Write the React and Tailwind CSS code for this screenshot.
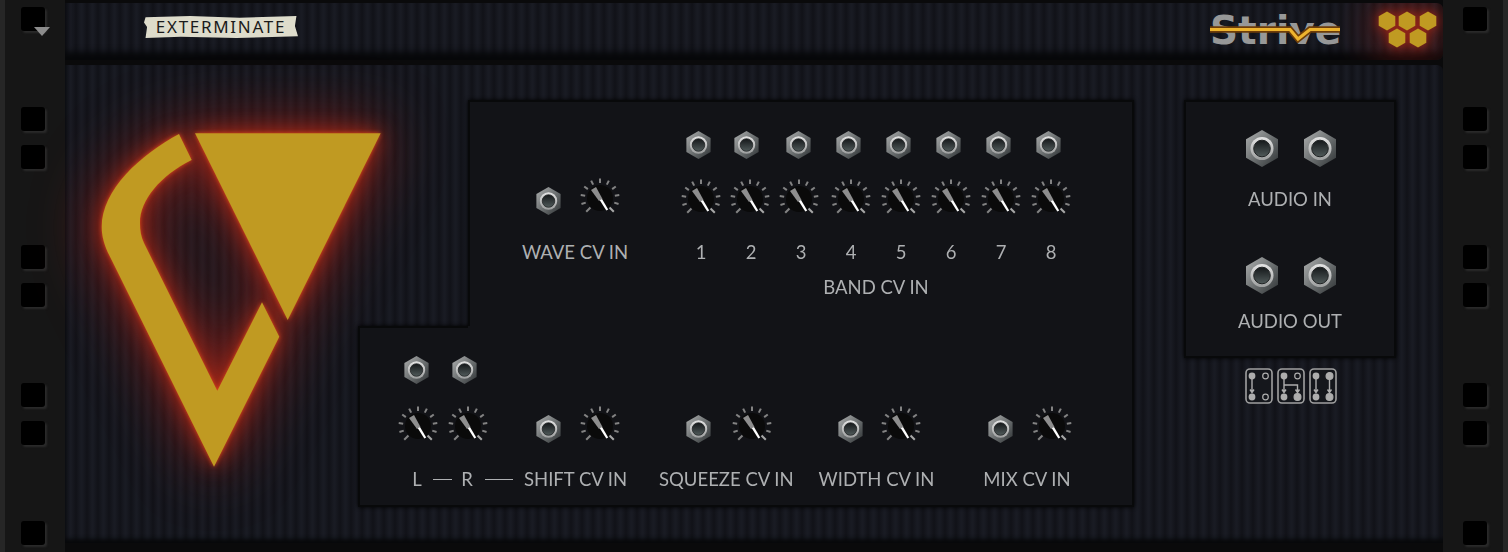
const HOLES = [7, 107, 145, 245, 283, 383, 421, 521];
const TICKS = [-135, -108, -81, -54, -27, 0, 27, 54, 81, 108, 135];

const Rail = ({ side }) => (
  <div
    className={`relative w-[65px] h-full shrink-0 bg-[#161616] ${
      side === 'left'
        ? 'pl-4 border-l-[5px] border-l-[#262626]'
        : 'pl-[20px] border-r-[5px] border-r-[#262626]'
    }`}
  >
    {HOLES.map((y, i) => (
      <div
        key={y}
        className="w-6 h-6 rounded-[3px] bg-black shadow-[2px_2px_2px_#2b2b2b]"
        style={{ marginTop: i === 0 ? y : y - HOLES[i - 1] - 24 }}
      />
    ))}
  </div>
);

const Defs = () => (
  <svg className="absolute w-0 h-0">
    <defs>
      <linearGradient id="nut" x1="0" y1="0" x2="1" y2="1">
        <stop offset="0" stopColor="#aeb0b0" />
        <stop offset="0.5" stopColor="#6e7273" />
        <stop offset="1" stopColor="#2e3234" />
      </linearGradient>
      <linearGradient id="ring" x1="0" y1="0" x2="0" y2="1">
        <stop offset="0" stopColor="#e4e4e4" />
        <stop offset="1" stopColor="#9c9e9e" />
      </linearGradient>
      <linearGradient id="hole" x1="0" y1="0" x2="0" y2="1">
        <stop offset="0" stopColor="#15181a" />
        <stop offset="1" stopColor="#505a5a" />
      </linearGradient>
    </defs>
  </svg>
);

const Jack = ({ big, className = '' }) => (
  <svg viewBox="0 0 32 37" className={`shrink-0 ${big ? 'w-8 h-[37px]' : 'w-[25px] h-[28px]'} ${className}`}>
    <path d="M16 0L32 9.2V27.8L16 37L0 27.8V9.2Z" fill="url(#nut)" />
    <circle cx="16" cy="18.5" r="11.5" fill="url(#ring)" />
    <circle cx="16" cy="18.5" r="8.3" fill="url(#hole)" stroke="#202324" />
  </svg>
);

const Knob = ({ className = '' }) => (
  <svg viewBox="-20 -20 40 40" className={`w-10 h-10 shrink-0 ${className}`}>
    {TICKS.map((a) => (
      <line
        key={a}
        x1="0"
        y1={a === 135 || a === -135 ? -13.5 : -15}
        x2="0"
        y2="-19.5"
        stroke={a === 135 ? '#a8a8a8' : '#838383'}
        strokeWidth="2"
        transform={`rotate(${a})`}
      />
    ))}
    <circle r="13" fill="#0a0a0a" />
    <path d="M-9 -8L-4 -11L2.5 1L-1 3Z" fill="#8e8e8e" />
    <path d="M-0.2 2.2L2 0.9L8.2 11.5L6.3 12.6Z" fill="#fff" />
  </svg>
);

const Label = ({ className = '', children }) => (
  <div className={`h-6 leading-6 text-[18.5px] text-center whitespace-nowrap text-[#aeb0b2] ${className}`}>
    {children}
  </div>
);

const Matrix = ({ mode }) => {
  const filledTR = mode === 3;
  const filledBR = mode !== 1;
  return (
    <svg viewBox="0 0 28 36" className="w-7 h-9 shrink-0">
      <rect x="1" y="1" width="26" height="34" rx="4" fill="#15171c" stroke="#a0a0a0" strokeWidth="1.6" />
      <circle cx="7" cy="8" r="3.4" fill="#adadad" />
      <circle cx="20.5" cy="8" r={filledTR ? 3.4 : 2.8} fill={filledTR ? '#adadad' : 'none'} stroke="#adadad" strokeWidth="1.2" />
      <circle cx="7" cy="29" r="3.4" fill="#adadad" />
      <circle cx="20.5" cy="29" r={filledBR ? 3.4 : 2.8} fill={filledBR ? '#adadad' : 'none'} stroke="#adadad" strokeWidth="1.2" />
      <g fill="none" stroke="#adadad" strokeWidth="1.4">
        <path d="M7 10V24M5 21.5L7 24.5L9 21.5" />
        {mode === 2 && <path d="M7 17H20.5V24M18.5 21.5L20.5 24.5L22.5 21.5" />}
        {mode === 3 && <path d="M20.5 10V24M18.5 21.5L20.5 24.5L22.5 21.5" />}
      </g>
    </svg>
  );
};

const Logo = () => (
  <svg
    viewBox="0 0 320 370"
    className="w-[320px] h-[370px] shrink-0 ml-[15px] mt-[10px] overflow-visible [filter:drop-shadow(0_0_2px_#e0481c)_drop-shadow(0_0_10px_#a82a18)_drop-shadow(0_0_30px_#8a1e18)]"
  >
    <path d="M115 23.3H300.7L207.7 210Z" fill="#c09a22" />
    <path
      d="M99 24L111.7 50C80 66 60 90 60 113C60 120 61 127 64 133L137.3 280.7L182 192.3L199.3 226.7L134 356.7L30 146.7C24 135 21.7 126 21.7 117C21.7 80 60 45 99 24Z"
      fill="#c09a22"
    />
  </svg>
);

const Honeycomb = () => (
  <svg
    viewBox="0 0 62 40"
    className="w-[62px] h-10 shrink-0 ml-[38px] mt-[6px] overflow-visible [filter:drop-shadow(0_0_6px_#b02a18)_drop-shadow(0_0_24px_#b02418)]"
  >
    {[[9, 11], [29, 11], [50, 11], [19, 28], [40, 28]].map(([x, y]) => (
      <path
        key={x}
        d={`M${x} ${y - 9.5}L${x + 8.3} ${y - 4.8}V${y + 4.8}L${x} ${y + 9.5}L${x - 8.3} ${y + 4.8}V${y - 4.8}Z`}
        fill="#c09a22"
      />
    ))}
  </svg>
);

const Strive = () => (
  <div className="relative w-[130px] h-10 mt-[8px]">
    <span className="block w-[130px] leading-10 text-[39px] font-bold font-['DejaVu_Sans',sans-serif] whitespace-nowrap text-[#979898]">
      Strive
    </span>
    <svg viewBox="0 0 130 40" className="absolute inset-0 w-[130px] h-10 overflow-visible">
      <path d="M0 18.5H80L88 28L100 18.5H130" fill="none" stroke="#6e3d08" strokeWidth="6.5" />
      <path d="M0 18.5H80L88 28L100 18.5H130" fill="none" stroke="#eeb42e" strokeWidth="3.2" />
    </svg>
  </div>
);

const BandCv = () => (
  <div className="flex flex-col ml-[52px] pt-[29px]">
    <div className="flex gap-[25px] ml-[5px]">
      {[0, 1, 2, 3, 4, 5, 6, 7].map((i) => (
        <Jack key={i} className={i === 1 ? '-ml-[2px] mr-[2px]' : ''} />
      ))}
    </div>
    <div className="flex gap-2.5 mt-[20px]">
      {[0, 1, 2, 3, 4, 5, 6, 7].map((i) => (
        <Knob key={i} className={i === 1 ? '-ml-[1px]' : i === 2 ? '-ml-[1px]' : i === 3 ? 'ml-[2px]' : ''} />
      ))}
    </div>
    <div className="flex gap-2.5 mt-[21px]">
      {[1, 2, 3, 4, 5, 6, 7, 8].map((n) => (
        <Label key={n} className="w-10">{n}</Label>
      ))}
    </div>
    <Label className="mt-[11px] w-[390px]">BAND CV IN</Label>
  </div>
);

const CvPanel = () => (
  <div className="flex flex-col items-end w-[776px] shrink-0 [filter:drop-shadow(0_0_2px_#000)]">
    <div className="flex w-[666px] h-[226px] bg-[#121317] border-x-2 border-t-2 border-[#08090a] pl-[51px]">
      <div className="flex flex-col items-center w-[108px] pt-[76px]">
        <div className="flex items-center gap-[19px] ml-[5px]">
          <Jack className="mt-[6px]" />
          <Knob />
        </div>
        <Label className="mt-[22px]">WAVE CV IN</Label>
      </div>
      <BandCv />
    </div>
    <div className="w-full h-[181px] bg-[#121317] border-x-2 border-b-2 border-[#08090a]">
      <div className="w-[108px] h-0.5 bg-[#08090a]" />
      <div className="flex gap-[23px] pl-[44px] mt-[28px]">
        <Jack />
        <Jack />
      </div>
      <div className="flex items-center pl-[38px] mt-[22px]">
        <Knob />
        <Knob className="ml-[10px]" />
        <Jack className="ml-[48px] mt-[6px]" />
        <Knob className="ml-[19px]" />
        <Jack className="ml-[66px] mt-[6px]" />
        <Knob className="ml-[21px]" />
        <Jack className="ml-[66px] mt-[6px]" />
        <Knob className="ml-[18px]" />
        <Jack className="ml-[67px] mt-[6px]" />
        <Knob className="ml-[19px]" />
      </div>
      <div className="flex items-center pl-[47px] mt-[21px]">
        <Label className="w-5">L</Label>
        <div className="w-[19px] h-px ml-[6px] bg-[#aeb0b2]" />
        <Label className="w-5 ml-[5px]">R</Label>
        <div className="w-7 h-px ml-[8px] bg-[#aeb0b2]" />
        <Label className="w-[102px] ml-[11px]">SHIFT CV IN</Label>
        <Label className="w-[133px] ml-[33px]">SQUEEZE CV IN</Label>
        <Label className="w-[119px] ml-[25px]">WIDTH CV IN</Label>
        <Label className="w-[88px] ml-[47px]">MIX CV IN</Label>
      </div>
    </div>
  </div>
);

const AudioPanel = () => (
  <div className="flex flex-col items-center w-[212px] ml-[50px] shrink-0">
    <div className="flex flex-col items-center w-full h-[258px] bg-[#121317] border-2 border-[#08090a] pt-[28px] [filter:drop-shadow(0_0_2px_#000)]">
      <div className="flex gap-[26px] ml-[2px]">
        <Jack big />
        <Jack big />
      </div>
      <Label className="mt-[20px]">AUDIO IN</Label>
      <div className="flex gap-[26px] mt-[46px] ml-[2px]">
        <Jack big />
        <Jack big />
      </div>
      <Label className="mt-[15px]">AUDIO OUT</Label>
    </div>
    <div className="flex gap-1 mt-[10px] ml-[2px]">
      <Matrix mode={1} />
      <Matrix mode={2} />
      <Matrix mode={3} />
    </div>
  </div>
);

const stripes =
  'bg-[repeating-linear-gradient(90deg,#111218_0px,#191b23_5px,#191b23_6px,#111218_11px)]';

export default function App() {
  return (
    <div className="relative flex w-[1508px] h-[552px] overflow-hidden bg-[#0a0a0b] font-['Lato',sans-serif]">
      <Defs />
      <Rail side="left" />
      <svg viewBox="0 0 16 9" className="absolute left-[34px] top-[27px] w-4 h-[9px]">
        <path d="M0 0H16L8 9Z" fill="#8c8c8c" />
      </svg>
      <div className="flex flex-col w-[1378px] pt-[3px]">
        <div
          className={`flex items-center h-[57px] pb-[9px] pl-[79px] rounded-tr-md rounded-br-md overflow-hidden shadow-[inset_0_-8px_6px_#07080a] ${stripes}`}
        >
          <div className="w-[154px] h-[22px] bg-[#dedccb] [clip-path:polygon(1%_6%,30%_0,62%_8%,99%_0,98%_45%,100%_92%,60%_100%,24%_94%,1%_100%,2%_50%,0_30%)] text-center text-[17px] leading-[22px] tracking-[1.7px] text-[#1a1a1a] font-['Noto_Sans',sans-serif] whitespace-nowrap">
            EXTERMINATE
          </div>
          <div className="flex items-center ml-auto mr-[3px]">
            <Strive />
            <Honeycomb />
          </div>
        </div>
        <div
          className={`flex items-start h-[478px] mt-[5px] pt-[35px] rounded-tr-md shadow-[inset_0_-4px_4px_#07080a] ${stripes}`}
        >
          <div className="w-[293px] h-0 shrink-0 flex">
            <Logo />
          </div>
          <CvPanel />
          <AudioPanel />
        </div>
      </div>
      <Rail side="right" />
    </div>
  );
}
